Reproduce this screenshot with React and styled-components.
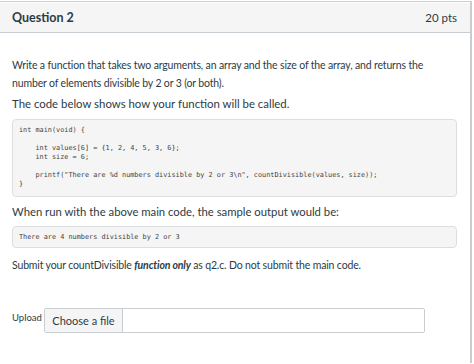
import React from "react";
import styled, { createGlobalStyle } from "styled-components";

const GlobalStyle = createGlobalStyle`
  html, body {
    margin: 0;
    padding: 0;
    background: #ffffff;
  }
  body {
    font-family: Lato, "Open Sans", sans-serif;
    color: #2d3b45;
  }
`;

const Card = styled.section`
  width: 472px;
  height: 362px;
  margin-top: 1px;
  border-top: 1px solid #c7cdd1;
  border-right: 2px solid #c7cdd1;
  box-sizing: border-box;
  display: flex;
  flex-direction: column;
`;

const Header = styled.header`
  height: 30px;
  margin-top: 1px;
  background: #f5f5f5;
  border-bottom: 1px solid #c7cdd1;
  display: flex;
  align-items: center;
  justify-content: space-between;
  padding: 0 13px 0 12px;
  box-sizing: border-box;
`;

const Title = styled.h2`
  margin: 0;
  font-size: 12.5px;
  font-weight: 700;
  color: #2d3b45;
`;

const Points = styled.span`
  font-size: 11.5px;
  color: #2d3b45;
`;

const Body = styled.div`
  padding: 24px 13px 0 12px;
  display: flex;
  flex-direction: column;
`;

const Text = styled.p`
  margin: ${(p) => p.$top || 0}px 0 0;
  font-size: ${(p) => p.$size || 10.5}px;
  letter-spacing: ${(p) => p.$track || 0}px;
  line-height: 17.5px;
`;

const CodeBox = styled.pre`
  margin: ${(p) => p.$top || 0}px 0 0;
  padding: ${(p) => p.$pad};
  background: #f5f5f5;
  border: 1px solid #dcdfe2;
  border-radius: 4px;
  font-family: "DejaVu Sans Mono", "Liberation Mono", monospace;
  font-size: 6.85px;
  line-height: 9px;
  color: #444;
  white-space: pre;
  overflow: hidden;
`;

const UploadRow = styled.div`
  display: flex;
  align-items: flex-start;
  margin-top: 33px;
`;

const UploadLabel = styled.span`
  font-size: 9.5px;
  width: 32px;
  padding-top: 4px;
`;

const FileField = styled.div`
  width: 381px;
  height: 25px;
  border: 1px solid #c7cdd1;
  border-radius: 2px;
  box-sizing: border-box;
  display: flex;
`;

const FileButton = styled.button`
  width: 78px;
  height: 100%;
  border: none;
  border-right: 1px solid #c7cdd1;
  background: #f5f5f5;
  font-family: Lato, "Open Sans", sans-serif;
  font-size: 11px;
  color: #2d3b45;
  padding: 0;
`;

const mainCode = `int main(void) {

    int values[6] = {1, 2, 4, 5, 3, 6};
    int size = 6;

    printf("There are %d numbers divisible by 2 or 3\\n", countDivisible(values, size));
}`;

export default function App() {
  return (
    <>
      <GlobalStyle />
      <Card>
        <Header>
          <Title>Question 2</Title>
          <Points>20 pts</Points>
        </Header>
        <Body>
          <Text $size={10.5} $track={-0.15}>
            Write a function that takes two arguments, an array and the size of the array, and returns the
            number of elements divisible by 2 or 3 (or both).
          </Text>
          <Text $top={3} $size={11.4}>The code below shows how your function will be called.</Text>
          <CodeBox $top={6} $pad="6px 6px 7px 6px">{mainCode}</CodeBox>
          <Text $top={6} $size={11.3}>When run with the above main code, the sample output would be:</Text>
          <CodeBox $top={6} $pad="6px 6px 5px 6px">There are 4 numbers divisible by 2 or 3</CodeBox>
          <Text $top={9} $size={10.5} $track={-0.15}>
            Submit your countDivisible <b><i>function only</i></b> as q2.c. Do not submit the main code.
          </Text>
          <UploadRow>
            <UploadLabel>Upload</UploadLabel>
            <FileField>
              <FileButton>Choose a file</FileButton>
            </FileField>
          </UploadRow>
        </Body>
      </Card>
    </>
  );
}
